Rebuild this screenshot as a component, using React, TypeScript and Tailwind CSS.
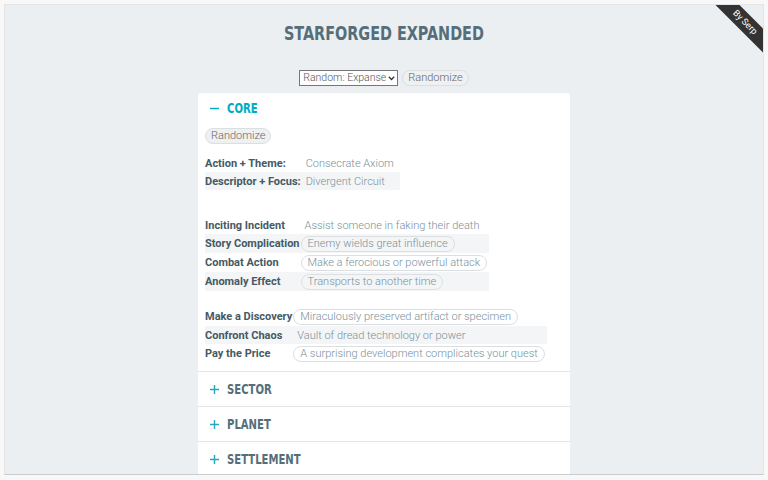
import React from 'react';

type Row = { label: string; value: string; pill?: boolean };

const groups: Row[][] = [
  [
    { label: 'Action + Theme:', value: 'Consecrate Axiom' },
    { label: 'Descriptor + Focus:', value: 'Divergent Circuit' },
  ],
  [
    { label: 'Inciting Incident', value: 'Assist someone in faking their death' },
    { label: 'Story Complication', value: 'Enemy wields great influence', pill: true },
    { label: 'Combat Action', value: 'Make a ferocious or powerful attack', pill: true },
    { label: 'Anomaly Effect', value: 'Transports to another time', pill: true },
  ],
  [
    { label: 'Make a Discovery', value: 'Miraculously preserved artifact or specimen', pill: true },
    { label: 'Confront Chaos', value: 'Vault of dread technology or power' },
    { label: 'Pay the Price', value: 'A surprising development complicates your quest', pill: true },
  ],
];

const heading = { fontFamily: '"DejaVu Sans Condensed", sans-serif' };

function Plus() {
  return (
    <svg width="11" height="11" viewBox="0 0 11 11" className="shrink-0">
      <path d="M5.5 1v9M1 5.5h9" stroke="#26a6b8" strokeWidth="1.4" />
    </svg>
  );
}

function Minus() {
  return (
    <svg width="11" height="11" viewBox="0 0 11 11" className="shrink-0">
      <path d="M1 5.5h9" stroke="#00acc1" strokeWidth="1.4" />
    </svg>
  );
}

function Table({ rows, mt }: { rows: Row[]; mt: string }) {
  return (
    <table className={`${mt} border-collapse text-[11px] leading-[15px]`}>
      <tbody>
        {rows.map((r, i) => (
          <tr key={r.label} className={i % 2 === 1 ? 'bg-[#f4f5f6]' : ''}>
            <td className={`${r.pill ? 'h-[19px]' : 'h-[18px]'} font-bold text-[#455a64] whitespace-nowrap align-middle`}>
              {r.label}
            </td>
            <td className="pl-[1px] pr-[2px] align-middle whitespace-nowrap">
              {r.pill ? (
                <span className="inline-block rounded-full border border-[#dcdfe1] px-[6px] leading-[14px] font-light text-[#78909c]">
                  {r.value}
                </span>
              ) : (
                <span className="inline-block px-[4px] font-light text-[#78909c]">{r.value}</span>
              )}
            </td>
          </tr>
        ))}
      </tbody>
    </table>
  );
}

function Section({ title }: { title: string }) {
  return (
    <div className="flex h-[35px] items-center gap-[7px] border-t border-[#e3e6e8] px-[11px]">
      <Plus />
      <span className="origin-left scale-x-80 text-[14px] font-bold text-[#546e7a]" style={heading}>
        {title}
      </span>
    </div>
  );
}

export default function App() {
  return (
    <div className="min-h-[480px] bg-[#f8f8f8] p-[4px]" style={{ fontFamily: 'Roboto, sans-serif' }}>
      <div className="relative flex h-[471px] flex-col items-center overflow-hidden border border-[#e2e4e6] border-b-[#c9cdd0] bg-[#eceff1] pt-[16px]">
        <h1 className="scale-x-80 text-[20px] font-bold leading-[24px] text-[#546e7a]" style={heading}>
          STARFORGED EXPANDED
        </h1>
        <div className="mt-[25px] flex items-center gap-[4px]">
          <div className="relative flex h-[16px] w-[99px] items-center border border-[#767676] bg-white pl-[3px] text-[10.5px] font-light text-[#555]">
            Random: Expanse
            <svg width="7" height="5" viewBox="0 0 7 5" className="absolute right-[2px] top-[5px]">
              <path d="M0.8 0.8l2.7 2.7 2.7-2.7" stroke="#333" strokeWidth="1.3" fill="none" />
            </svg>
          </div>
          <button className="h-[16px] rounded-full border border-[#dcdfe1] bg-[#eef0f1] px-[5px] text-[11px] font-light leading-[14px] text-[#666]">
            Randomize
          </button>
        </div>
        <div className="mt-[7px] w-[372px] rounded-[3px] bg-white">
          <div className="flex h-[30px] items-center gap-[7px] px-[11px]">
            <Minus />
            <span className="origin-left scale-x-80 text-[14px] font-bold text-[#00acc1]" style={heading}>
              CORE
            </span>
          </div>
          <div className="flex flex-col items-start px-[7px] pt-[5px] pb-[8px]">
            <button className="h-[16px] rounded-full border border-[#dcdfe1] bg-[#eef0f1] px-[5px] text-[11px] font-light leading-[14px] text-[#666]">
              Randomize
            </button>
            <Table rows={groups[0]} mt="mt-[10px]" />
            <Table rows={groups[1]} mt="mt-[26px]" />
            <Table rows={groups[2]} mt="mt-[16px]" />
          </div>
          <Section title="SECTOR" />
          <div className="border-t border-[#c9cdd0]" />
          <div className="-mt-px">
            <Section title="PLANET" />
          </div>
          <Section title="SETTLEMENT" />
        </div>
        <div className="absolute right-0 top-0 h-[60px] w-[60px] overflow-hidden">
          <div className="absolute right-[-32px] top-[9px] w-[100px] rotate-45 bg-[#333] text-center text-[9px] leading-[17px] text-white">
            By Serp
          </div>
        </div>
      </div>
    </div>
  );
}
